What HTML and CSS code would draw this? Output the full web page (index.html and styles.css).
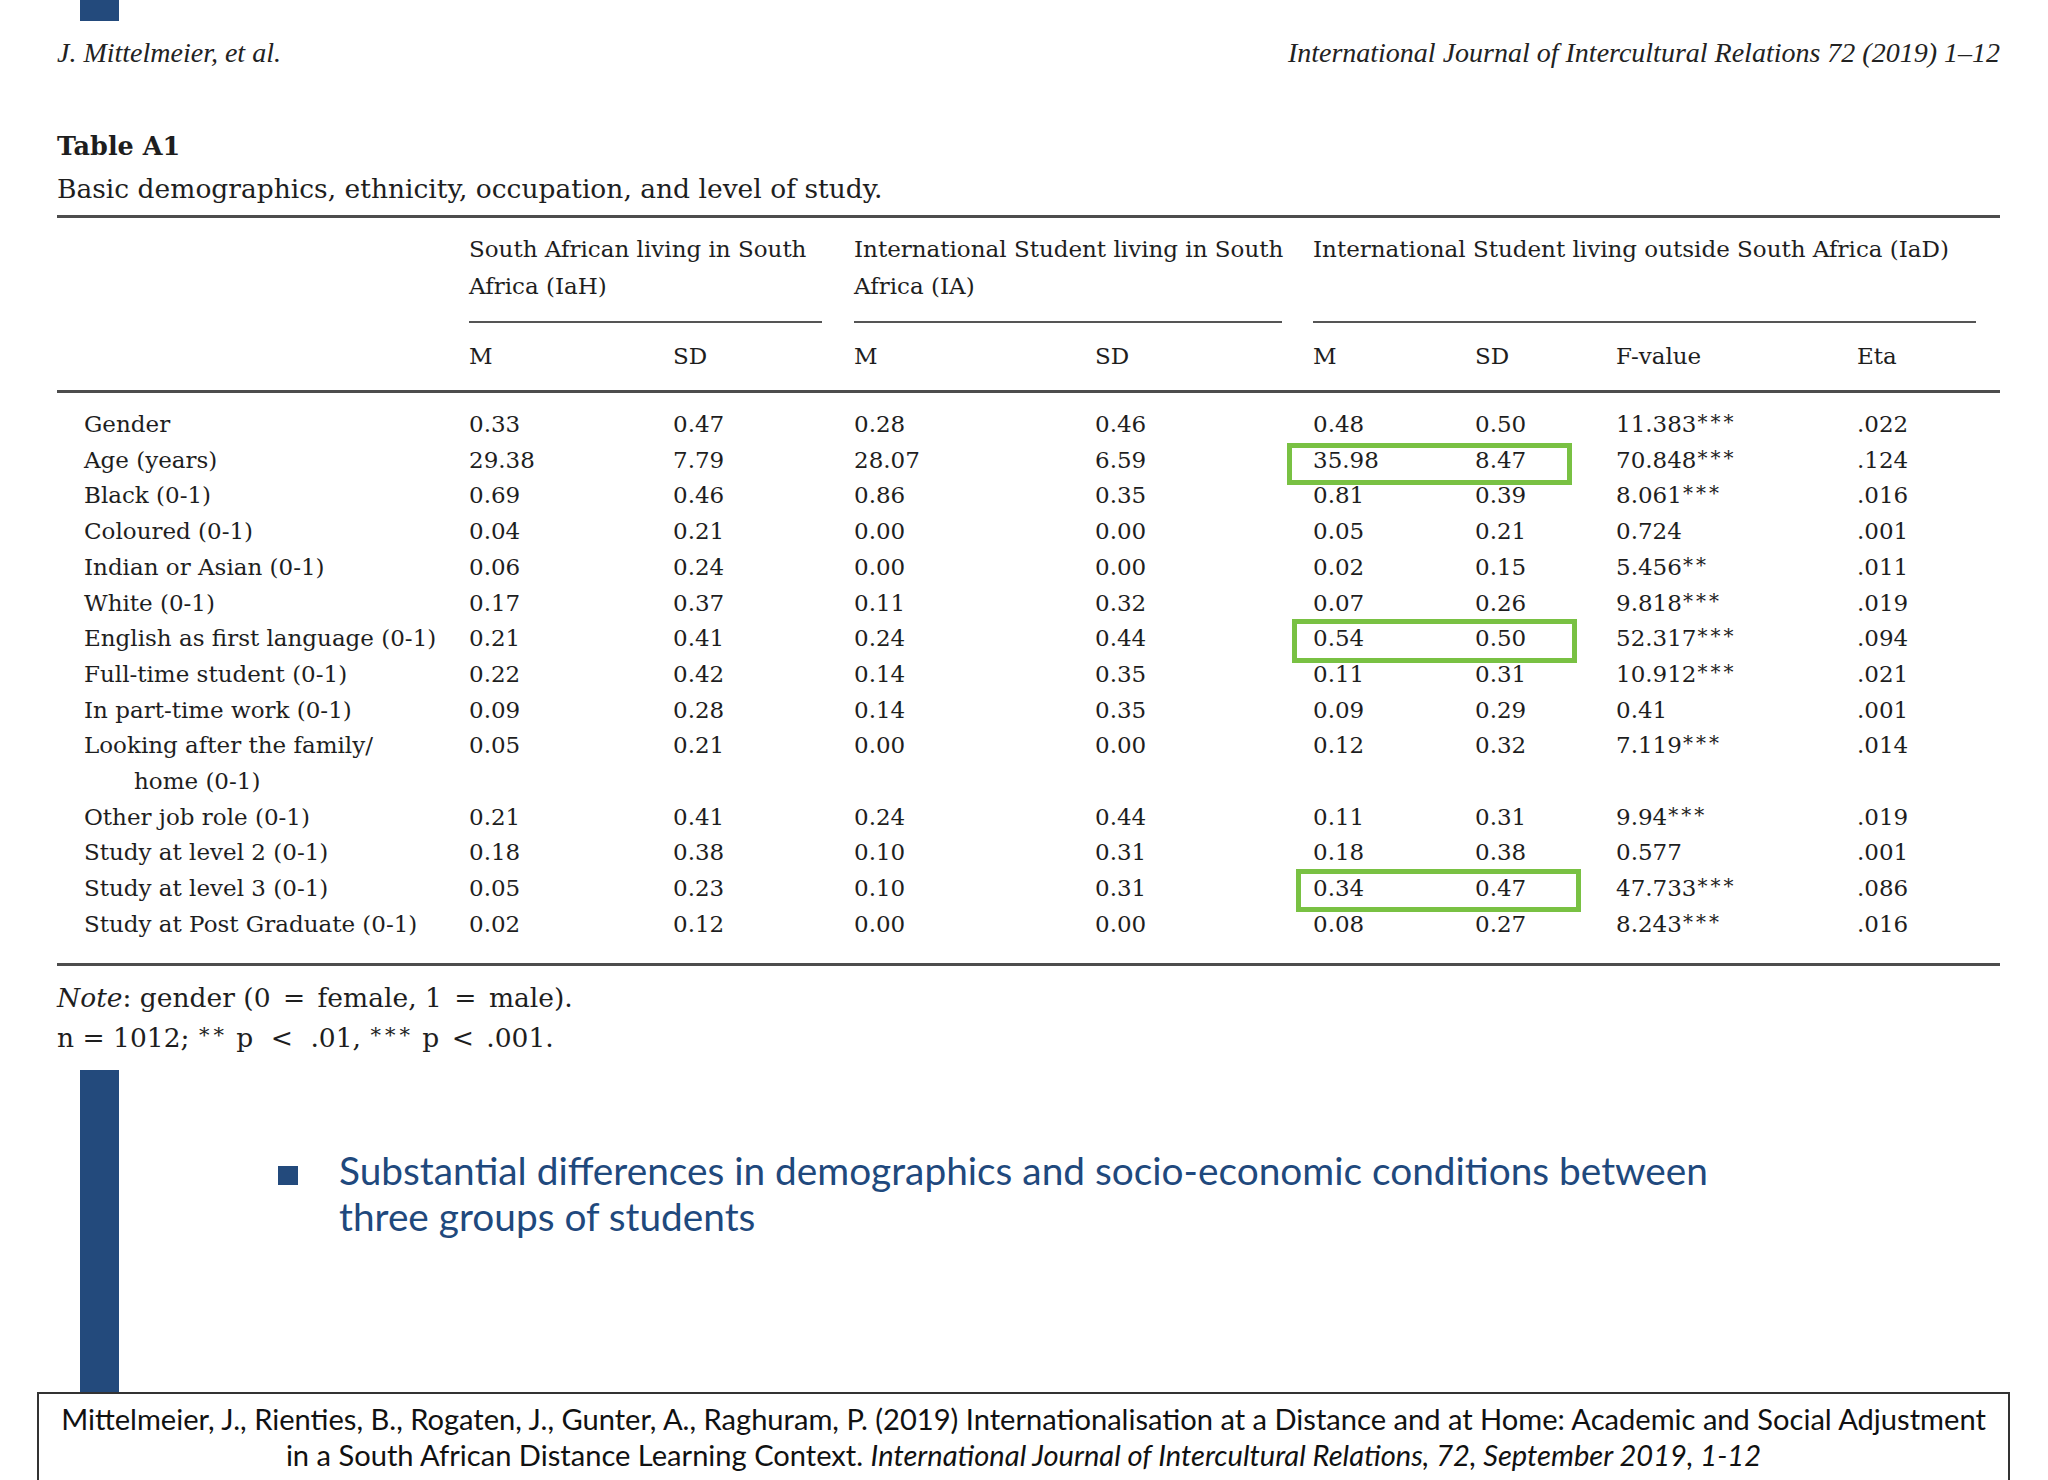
FILE: index.html
```html
<!DOCTYPE HTML>
<html lang="en">
  <head>
    <title>Table A1 - Basic demographics</title>
    <meta charset="utf-8">
    <link rel="stylesheet" href="styles.css">
  </head>
  <body>

  <div class="tab-mark"></div>

  <div class="running-head">
    <span>J. Mittelmeier, et al.</span>
    <span>International Journal of Intercultural Relations 72 (2019) 1–12</span>
  </div>

  <div class="table-wrap">
    <div class="table-title">Table A1</div>
    <div class="table-caption">Basic demographics, ethnicity, occupation, and level of study.</div>

    <table class="stats">
      <colgroup>
        <col style="width:412px">
        <col style="width:204px">
        <col style="width:181px">
        <col style="width:241px">
        <col style="width:218px">
        <col style="width:162px">
        <col style="width:141px">
        <col style="width:241px">
        <col style="width:143px">
      </colgroup>
      <thead>
        <tr class="groups">
          <th></th>
          <th colspan="2"><div class="group g1">South African living in South<br>Africa (IaH)</div></th>
          <th colspan="2"><div class="group g2">International Student living in South<br>Africa (IA)</div></th>
          <th colspan="4"><div class="group g3">International Student living outside South Africa (IaD)<br>&nbsp;</div></th>
        </tr>
        <tr class="subs">
          <th></th>
          <th>M</th><th>SD</th>
          <th>M</th><th>SD</th>
          <th>M</th><th>SD</th><th>F-value</th><th>Eta</th>
        </tr>
      </thead>
      <tbody>
        <tr><td class="label">Gender</td><td>0.33</td><td>0.47</td><td>0.28</td><td>0.46</td><td>0.48</td><td>0.50</td><td>11.383<span class="sig">***</span></td><td>.022</td></tr>
        <tr><td class="label">Age (years)</td><td>29.38</td><td>7.79</td><td>28.07</td><td>6.59</td><td class="mark"><span class="hl hl-a"></span>35.98</td><td>8.47</td><td>70.848<span class="sig">***</span></td><td>.124</td></tr>
        <tr><td class="label">Black (0-1)</td><td>0.69</td><td>0.46</td><td>0.86</td><td>0.35</td><td>0.81</td><td>0.39</td><td>8.061<span class="sig">***</span></td><td>.016</td></tr>
        <tr><td class="label">Coloured (0-1)</td><td>0.04</td><td>0.21</td><td>0.00</td><td>0.00</td><td>0.05</td><td>0.21</td><td>0.724</td><td>.001</td></tr>
        <tr><td class="label">Indian or Asian (0-1)</td><td>0.06</td><td>0.24</td><td>0.00</td><td>0.00</td><td>0.02</td><td>0.15</td><td>5.456<span class="sig">**</span></td><td>.011</td></tr>
        <tr><td class="label">White (0-1)</td><td>0.17</td><td>0.37</td><td>0.11</td><td>0.32</td><td>0.07</td><td>0.26</td><td>9.818<span class="sig">***</span></td><td>.019</td></tr>
        <tr><td class="label">English as first language (0-1)</td><td>0.21</td><td>0.41</td><td>0.24</td><td>0.44</td><td class="mark"><span class="hl hl-b"></span>0.54</td><td>0.50</td><td>52.317<span class="sig">***</span></td><td>.094</td></tr>
        <tr><td class="label">Full-time student (0-1)</td><td>0.22</td><td>0.42</td><td>0.14</td><td>0.35</td><td>0.11</td><td>0.31</td><td>10.912<span class="sig">***</span></td><td>.021</td></tr>
        <tr><td class="label">In part-time work (0-1)</td><td>0.09</td><td>0.28</td><td>0.14</td><td>0.35</td><td>0.09</td><td>0.29</td><td>0.41</td><td>.001</td></tr>
        <tr><td class="label wrap">Looking after the family/<br>home (0-1)</td><td>0.05</td><td>0.21</td><td>0.00</td><td>0.00</td><td>0.12</td><td>0.32</td><td>7.119<span class="sig">***</span></td><td>.014</td></tr>
        <tr><td class="label">Other job role (0-1)</td><td>0.21</td><td>0.41</td><td>0.24</td><td>0.44</td><td>0.11</td><td>0.31</td><td>9.94<span class="sig">***</span></td><td>.019</td></tr>
        <tr><td class="label">Study at level 2 (0-1)</td><td>0.18</td><td>0.38</td><td>0.10</td><td>0.31</td><td>0.18</td><td>0.38</td><td>0.577</td><td>.001</td></tr>
        <tr><td class="label">Study at level 3 (0-1)</td><td>0.05</td><td>0.23</td><td>0.10</td><td>0.31</td><td class="mark"><span class="hl hl-c"></span>0.34</td><td>0.47</td><td>47.733<span class="sig">***</span></td><td>.086</td></tr>
        <tr><td class="label">Study at Post Graduate (0-1)</td><td>0.02</td><td>0.12</td><td>0.00</td><td>0.00</td><td>0.08</td><td>0.27</td><td>8.243<span class="sig">***</span></td><td>.016</td></tr>
      </tbody>
    </table>

    <div class="table-note">
      <div><em>Note</em>: gender (0 <span class="op">=</span> female, 1 <span class="op">=</span> male).</div>
      <div>n = 1012; <span class="sig">**</span> p <span class="op wide">&lt;</span> .01, <span class="sig">***</span> p <span class="op">&lt;</span> .001.</div>
    </div>
  </div>

  <div class="point">
    <div class="point-bar"></div>
    <div class="point-body">
      <div class="bullet"></div>
      <div class="point-text">Substantial differences in demographics and socio-economic conditions between<br>three groups of students</div>
    </div>
  </div>

  <div class="cite">
    Mittelmeier, J., Rienties, B., Rogaten, J., Gunter, A., Raghuram, P. (2019) Internationalisation at a Distance and at Home: Academic and Social Adjustment<br>
    in a South African Distance Learning Context. <em>International Journal of Intercultural Relations, 72, September 2019, 1-12</em>
  </div>

  </body>
</html>
```

FILE: styles.css
```css
html {
  height: 100%;
}
body {
  margin: 0;
  padding: 0;
  background: #ffffff;
  color: #1e1e1e;
  font-family: "DejaVu Serif", serif;
  overflow: hidden;
}
.tab-mark {
  width: 39px;
  height: 21px;
  margin-left: 80px;
  background: #234a7c;
}
.running-head {
  display: flex;
  justify-content: space-between;
  margin: 15px 48px 0 57px;
  font: italic 28px/34px "Liberation Serif", serif;
  color: #222;
}
.table-wrap {
  margin: 60px 48px 0 57px;
}
.table-title {
  font-weight: bold;
  font-size: 25.5px;
  line-height: 32px;
}
.table-caption {
  margin-top: 11px;
  font-size: 26.5px;
  line-height: 32px;
}

/* the table itself */
.stats {
  margin-top: 10px;
  width: 1943px;
  table-layout: fixed;
  border-collapse: collapse;
  border-top: 3px solid #4d4d4d;
  border-bottom: 3px solid #4d4d4d;
  font-size: 23px;
}
.stats th {
  font-weight: normal;
  text-align: left;
  vertical-align: top;
  padding: 0;
  line-height: 37px;
  white-space: nowrap;
}
.groups th {
  padding-top: 13px;
}
.group {
  padding-bottom: 16px;
  border-bottom: 2px solid #555;
}
.g1 { margin-right: 32px; }
.g2 { margin-right: 31px; }
.g3 { margin-right: 24px; }
.subs th {
  padding-top: 15px;
  padding-bottom: 15px;
  border-bottom: 3px solid #4d4d4d;
}
.stats td {
  padding: 0;
  line-height: 35.7px;
  vertical-align: top;
  white-space: nowrap;
}
.stats tbody tr:first-child td {
  padding-top: 14px;
}
.stats tbody tr:last-child td {
  padding-bottom: 20px;
}
.stats td.label {
  padding-left: 27px;
}
.stats td.wrap {
  padding-left: 77px;
  text-indent: -50px;
}
.sig {
  font-size: 20px;
  vertical-align: 3px;
  line-height: 0;
  letter-spacing: 3px;
  margin-left: 1px;
}
.mark {
  position: relative;
}
.hl {
  position: absolute;
  top: 0;
  left: -26px;
  width: 285px;
  height: 42px;
  box-sizing: border-box;
  border: 5px solid #79c143;
}
.hl-b {
  top: -2px;
  left: -21px;
  height: 44px;
}
.hl-c {
  top: -2px;
  left: -17px;
  height: 43px;
}
.table-note {
  margin-top: 12px;
  font-size: 26.5px;
  line-height: 40px;
}
.table-note .sig {
  font-size: 21px;
  vertical-align: 5px;
  letter-spacing: 4px;
}
.table-note .op {
  padding: 0 4px;
}
.table-note .op.wide {
  padding: 0 9px;
}

/* slide bullet */
.point {
  display: flex;
  margin-top: 12px;
}
.point-bar {
  width: 39px;
  height: 322px;
  margin-left: 80px;
  background: #234a7c;
}
.point-body {
  display: flex;
  align-items: flex-start;
  margin-left: 159px;
  padding-top: 77px;
}
.bullet {
  width: 20px;
  height: 19px;
  margin-top: 19px;
  margin-right: 41px;
  background: #234a7c;
}
.point-text {
  font: 38.8px/46px Lato, sans-serif;
  color: #1f497d;
}
.cite {
  margin-left: 37px;
  width: 1969px;
  border: 2px solid #333;
  padding: 7px 0 10px;
  text-align: center;
  font: 29.1px/36px Lato, sans-serif;
  color: #111;
}
```
